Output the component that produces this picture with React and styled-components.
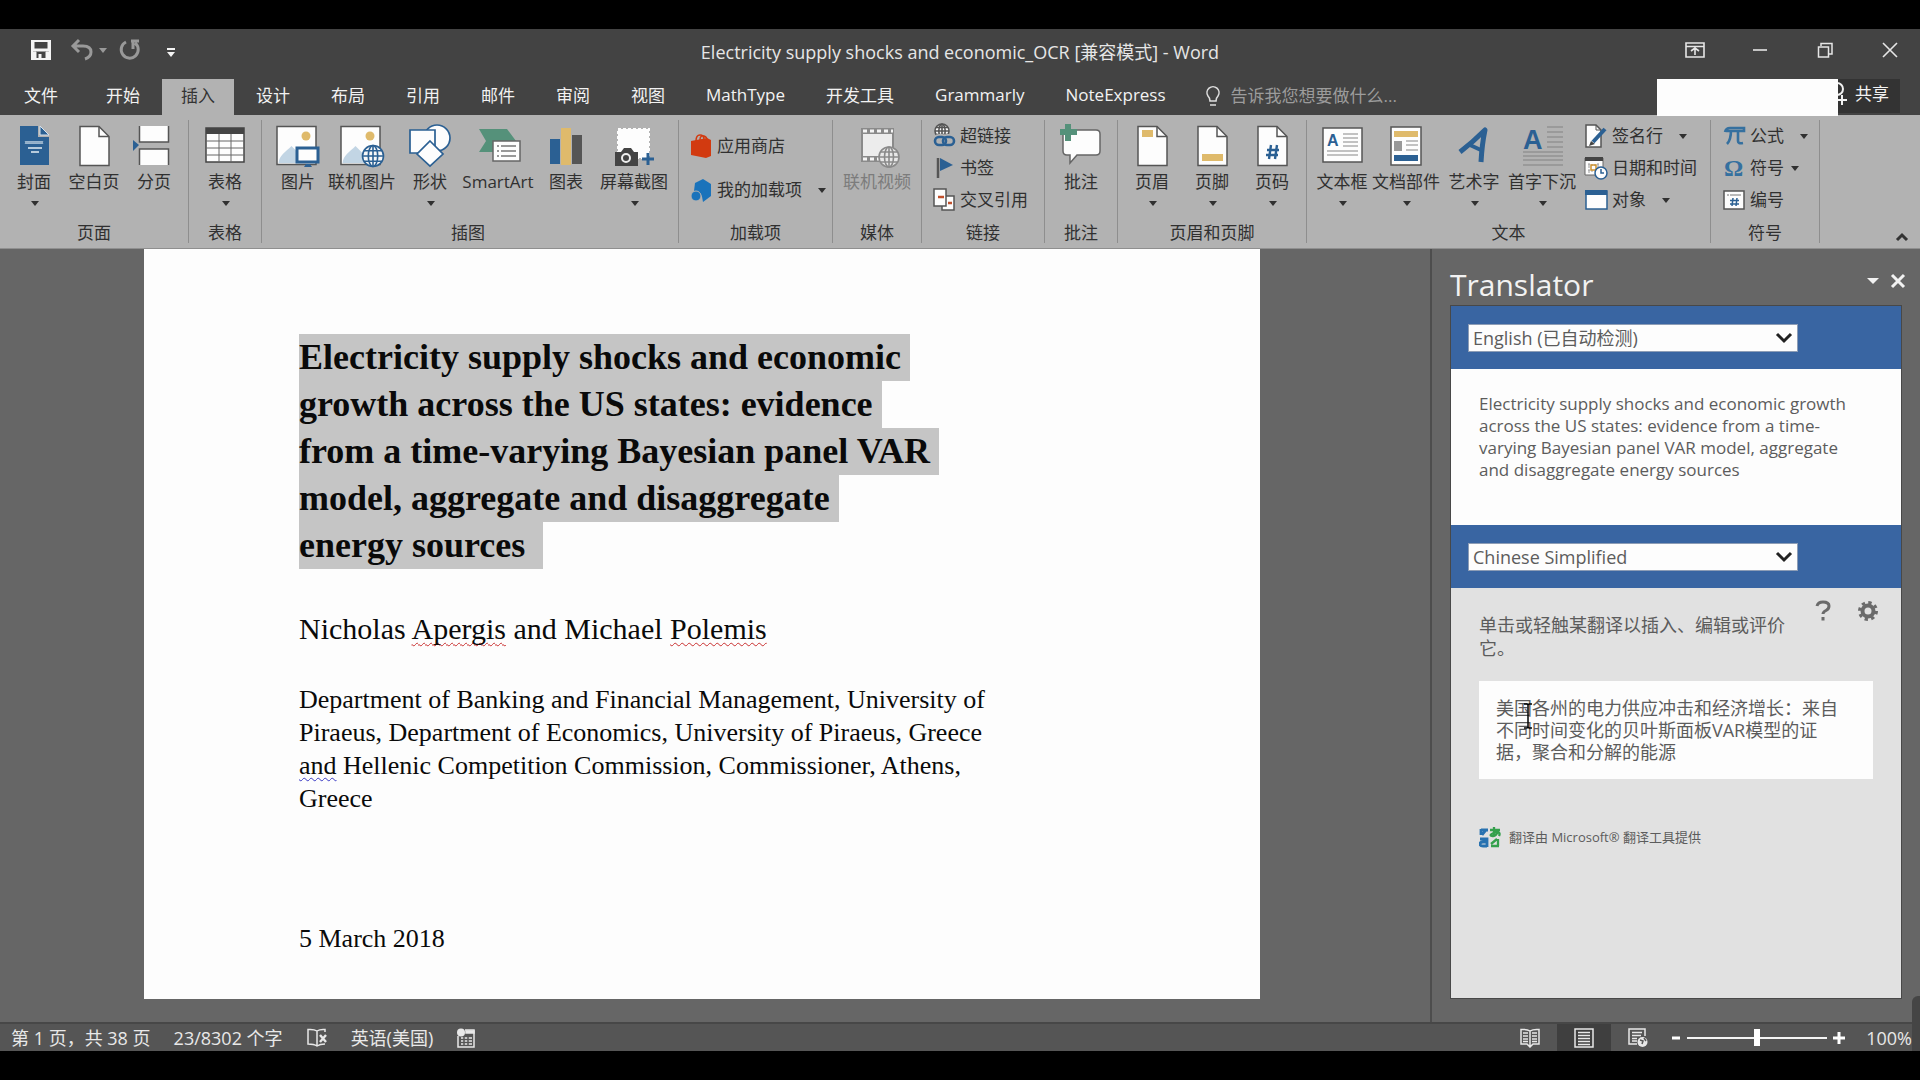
import React from "react"
import styled, { createGlobalStyle, css } from "styled-components"

const colors = {
  chrome: "#434343",
  ribbon: "#b2b2b2",
  desk: "#666666",
  status: "#555555",
  blue: "#2b6093",
  paneBlue: "#3965a2",
  dark: "#444444",
  gold: "#dfba6b",
  green: "#55917a"
}

const GlobalStyle = createGlobalStyle`
  * {
    box-sizing: border-box;
  }
  body {
    margin: 0;
    background: black;
    font-family: "Open Sans", "Noto Sans CJK SC", sans-serif;
    font-size: 17px;
  }
  button, input, select {
    font: inherit;
    color: inherit;
    border: none;
    padding: 0;
    margin: 0;
    background: none;
  }
  svg {
    display: block;
    flex: none;
  }
`

const Window = styled.div`
  min-height: 100vh;
  padding: 29px 0;
  display: flex;
  flex-direction: column;
  background: black;
`

/* title bar */

const TitleBar = styled.header`
  display: grid;
  grid-template-columns: 1fr auto 1fr;
  height: 50px;
  background: ${colors.chrome};
  color: #e6e6e6;
`
const QuickAccess = styled.div`
  display: flex;
  align-items: center;
  gap: 10px;
  padding: 0 0 8px 29px;
`
const QuickButton = styled.button`
  display: flex;
  align-items: center;
  justify-content: center;
  height: 28px;
  color: ${props => (props.$dim ? "#999" : "#f4f4f4")};
`
const DocumentName = styled.div`
  font-size: 18px;
  line-height: 46px;
  white-space: nowrap;
`
const WindowButtons = styled.div`
  display: flex;
  justify-content: flex-end;
  gap: 5px;
`
const WindowButton = styled.button`
  display: flex;
  align-items: center;
  justify-content: center;
  width: 60px;
  height: 42px;
`

/* tabs */

const TabBar = styled.nav`
  position: relative;
  display: flex;
  gap: 3px;
  height: 36px;
  padding-right: 20px;
  background: ${colors.chrome};
  color: #f2f2f2;
`
const activeTab = css`
  background: ${colors.ribbon};
  color: #333;
`
const Tab = styled.button`
  padding: 0 19px 5px;
  height: 36px;
  white-space: nowrap;
  ${props => props.$file && css`
    padding: 0 26px 5px 24px;
  `}
  ${props => props.$active && activeTab}
`
const TellMe = styled.label`
  display: flex;
  flex: 1;
  align-items: center;
  gap: 10px;
  padding: 0 0 3px 17px;
  color: #aaa;
`
const TellMeInput = styled.input`
  width: 200px;
  height: 30px;
  outline: none;
  &::placeholder {
    color: #9c9c9c;
    opacity: 1;
  }
`
const ShareButton = styled.button`
  display: flex;
  align-items: center;
  justify-content: flex-end;
  gap: 6px;
  width: 96px;
  height: 34px;
  padding: 0 11px 7px 0;
  background: #333;
`
const AccountCover = styled.div`
  position: absolute;
  top: 0;
  right: 82px;
  width: 181px;
  height: 37px;
  background: #fdfdfd;
`

/* ribbon */

const Ribbon = styled.div`
  display: flex;
  height: 134px;
  padding-top: 5px;
  background: ${colors.ribbon};
  border-bottom: 1px solid #8f8f8f;
  color: #303030;
`
const Group = styled.section`
  display: flex;
  flex-direction: column;
  height: 123px;
  padding: 0 ${props => props.$padEnd || props.$pad || 6}px 0 ${props => props.$pad || 6}px;
  border-right: 1px solid #8e8e8e;
`
const GroupBody = styled.div`
  display: flex;
  flex: 1;
`
const GroupName = styled.div`
  text-align: center;
  line-height: 20px;
`
const BigButton = styled.button`
  display: flex;
  flex-direction: column;
  align-items: center;
  width: ${props => (props.$wide ? 68 : 60)}px;
  padding-top: 4px;
  line-height: 28px;
  white-space: nowrap;
  color: ${props => (props.disabled ? "#7c7c7c" : "inherit")};
`
const Stack = styled.div`
  display: flex;
  flex-direction: column;
  gap: ${props => (props.$loose ? 16 : 4)}px;
  padding: ${props => (props.$loose ? "12px 0 0 4px" : "2px 8px 0 2px")};
  ${props => props.$inset && css`
    padding-left: 8px;
  `}
`
const SmallButton = styled.button`
  display: flex;
  align-items: center;
  gap: 4px;
  height: 28px;
  line-height: 28px;
  white-space: nowrap;
`
const CaretShape = styled.span`
  width: 0;
  border: 4px solid transparent;
  border-top: 5px solid currentColor;
  border-bottom: none;
  ${props => props.$below && css`
    margin: 5px 0 0 2px;
  `}
  ${props => props.$side && css`
    margin-left: ${props.$near ? 3 : 12}px;
  `}
`
const CollapseButton = styled.button`
  margin: auto 11px 6px auto;
`

/* workspace */

const Workspace = styled.main`
  display: flex;
  flex: 1;
  background: ${colors.desk};
`
const Desk = styled.div`
  display: flex;
  flex: 1;
  padding: 0 170px 23px 144px;
`
const Page = styled.article`
  flex: 1;
  padding: 85px 155px 0;
  background: #fdfdfd;
  color: #0a0a0a;
  font-family: "Liberation Serif", "Noto Sans CJK SC", serif;
  font-size: 26px;
  line-height: 33px;
`
const Heading = styled.h1`
  margin: 0 0 41px;
  font-size: 36px;
  line-height: 47px;
`
const Selected = styled.span`
  display: block;
  width: fit-content;
  background: #c5c5c5;
  white-space: pre;
`
const Authors = styled.p`
  margin: 0 0 35px;
  font-size: 30px;
  line-height: 38px;
`
const Affiliation = styled.p`
  max-width: 710px;
  margin: 0 0 107px;
`
const Misspelt = styled.span`
  text-decoration: underline wavy ${props => props.$color || "#c93030"} 1px;
  text-decoration-skip-ink: none;
  text-underline-offset: 3px;
`
const DateLine = styled.p`
  margin: 0;
`

/* translator pane */

const Pane = styled.aside`
  display: flex;
  flex-direction: column;
  width: 490px;
  padding: 17px 18px 23px 18px;
  border-left: 2px solid #4d4d4d;
`
const PaneHeader = styled.div`
  display: flex;
  align-items: flex-start;
  gap: 10px;
  height: 39px;
  margin-right: -4px;
  color: #f2f2f2;
`
const PaneTitle = styled.h2`
  flex: 1;
  margin: 0;
  font-size: 30px;
  font-weight: 400;
  line-height: 38px;
`
const PaneButton = styled.button`
  display: flex;
  align-items: center;
  height: 30px;
`
const PaneBody = styled.div`
  display: flex;
  flex: 1;
  flex-direction: column;
  border: 1px solid #484848;
  background: #e1e1e1;
  color: #5c5c5c;
  line-height: 22px;
`
const LanguageBar = styled.div`
  display: flex;
  align-items: center;
  height: 63px;
  padding: 0 17px;
  background: ${colors.paneBlue};
`
const SelectBox = styled.label`
  display: grid;
  align-items: center;
  width: 330px;
  height: 28px;
  background: #fdfdfd;
  border: 1px solid #8d9db6;
  > * {
    grid-area: 1 / 1;
  }
  > svg {
    justify-self: end;
    margin-right: 4px;
    pointer-events: none;
  }
`
const Select = styled.select`
  appearance: none;
  width: 100%;
  height: 26px;
  padding-left: 4px;
  font-size: 18px;
  outline: none;
`
const SourceText = styled.div`
  height: 156px;
  padding: 24px 40px 0 28px;
  background: #fdfdfd;
`
const Result = styled.div`
  display: flex;
  flex: 1;
  flex-direction: column;
  padding: 12px 28px;
`
const HintRow = styled.div`
  display: flex;
  justify-content: space-between;
  font-size: 18px;
  line-height: 23px;
`
const Hint = styled.p`
  width: 320px;
  margin: 14px 0 21px;
`
const Tools = styled.div`
  display: flex;
  align-items: flex-start;
  gap: 26px;
  margin-right: -6px;
  color: #6a6a6a;
`
const Translation = styled.div`
  position: relative;
  padding: 16px 27px 16px 17px;
  background: #fdfdfd;
  font-size: 18px;
`
const Pointer = styled.svg`
  position: absolute;
  left: 44px;
  top: 22px;
`
const Credit = styled.div`
  display: flex;
  align-items: center;
  gap: 8px;
  margin-top: 46px;
  font-size: 13px;
  line-height: 24px;
`

/* status bar */

const StatusBar = styled.footer`
  display: flex;
  align-items: center;
  height: 29px;
  padding: 0 8px 0 11px;
  border-top: 2px solid #474747;
  background: ${colors.status};
  color: #e8e8e8;
  font-size: 18px;
  line-height: 26px;
  white-space: nowrap;
`
const StatusItems = styled.div`
  display: flex;
  flex: 1;
  align-items: center;
  gap: 23px;
`
const ViewButton = styled.button`
  display: flex;
  align-items: center;
  justify-content: center;
  width: 54px;
  height: 27px;
  background: ${props => (props.$active ? "#3f3f3f" : "none")};
`
const ZoomButton = styled.button`
  display: flex;
  align-items: center;
  padding: 0 6px;
`
const ZoomSlider = styled.input`
  appearance: none;
  width: 140px;
  height: 18px;
  background: linear-gradient(#f4f4f4, #f4f4f4) center / 100% 2px no-repeat;
  &::-webkit-slider-thumb {
    appearance: none;
    width: 6px;
    height: 17px;
    background: white;
  }
`
const ZoomValue = styled.span`
  width: 61px;
  text-align: right;
`
const ScrollThumb = styled.div`
  position: absolute;
  right: 0;
  bottom: 29px;
  width: 8px;
  height: 55px;
  border-radius: 6px 0 0 0;
  background: #454545;
`

const Big = ({ children }) => (
  <svg width="52" height="44" viewBox="0 0 52 44" fill="none">{children}</svg>
)
const Small = ({ children }) => (
  <svg width="24" height="26" viewBox="0 0 24 26" fill="none">{children}</svg>
)

const Globe = ({ x, y, r, color, fill = "#f8f8f8" }) => (
  <g stroke={color} strokeWidth="1.6" fill="none">
    <circle cx={x} cy={y} r={r} fill={fill} />
    <ellipse cx={x} cy={y} rx={r * 0.45} ry={r} />
    <path d={`M${x} ${y - r}V${y + r}M${x - r} ${y}H${x + r}M${x - r * 0.86} ${y - r * 0.5}H${x + r * 0.86}M${x - r * 0.86} ${y + r * 0.5}H${x + r * 0.86}`} />
  </g>
)
const Sheet = ({ children }) => (
  <Big>
    <path d="M12 2.5h19l10 10v29H12z" fill="#fdfdfd" stroke="#555" strokeWidth="1.5" />
    <path d="M31 2.5v10h10" stroke="#555" strokeWidth="1.5" />
    {children}
  </Big>
)
const Photo = ({ children }) => (
  <Big>
    <path d="M5 2.5h39v38H5z" fill="#fdfdfd" stroke="#555" strokeWidth="1.5" />
    <circle cx="34" cy="12" r="4.5" fill={colors.gold} />
    <path d="M6.500 39c1-8 7-11 13-17l10 10v7z" fill="#c2d5e4" />
    {children}
  </Big>
)

const CoverIcon = () => (
  <Big>
    <path d="M12 2h18v11h11v28H12z" fill={colors.blue} />
    <path d="M32 2l9 9h-9z" fill={colors.blue} stroke="#d5e2ee" />
    <path d="M17 17l2 3 2-3 2 3 2-3 2 3 2-3 2 3 2-3 2 3M17 20l2-3 2 3 2-3 2 3 2-3 2 3 2-3 2 3 2-3" stroke="#c8d8e6" strokeWidth=".8" />
    <path d="M20 24h14M23 28h8" stroke="#e6eef5" strokeWidth="1.5" />
  </Big>
)
const BreakIcon = () => (
  <Big>
    <path d="M11.500 2v16h29V2M11.500 41V25h29v16" fill="#fdfdfd" stroke="#555" strokeWidth="1.5" />
    <path d="M5 16l6 5-6 6z" fill={colors.blue} />
  </Big>
)
const TableIcon = () => (
  <Big>
    <path d="M7 4h38v34H7z" fill="#fdfdfd" stroke="#444" strokeWidth="1.5" />
    <path d="M7 4h38v6H7z" fill="#444" />
    <path d="M7 17h38M7 24h38M7 31h38M20 10v28M32 10v28" stroke="#666" />
  </Big>
)
const PictureIcon = () => (
  <Photo>
    <path d="M25 24h21v14H25z" fill="#fdfdfd" stroke={colors.blue} strokeWidth="3" />
    <path d="M32 43h8l-2-3h-4z" fill={colors.blue} />
  </Photo>
)
const OnlinePictureIcon = () => (
  <Photo>
    <Globe x={37} y={32} r={10.5} color={colors.blue} />
  </Photo>
)
const ShapesIcon = () => (
  <Big>
    <g fill="#fdfdfd" stroke={colors.blue} strokeWidth="1.7">
      <circle cx="33" cy="14" r="13" />
      <path d="M6 6h25v23H6z" />
      <path d="M26 17l13 13-13 12-13-12z" />
    </g>
  </Big>
)
const SmartArtIcon = () => (
  <Big>
    <path d="M7 5h28l9 12-9 11H7l7-11z" fill={colors.green} />
    <path d="M21 17h27v20H21z" fill="#fdfdfd" stroke="#666" strokeWidth="1.5" />
    <path d="M29 22h15M29 27h15M29 32h15M25 22h2M25 27h2M25 32h2" stroke="#777" strokeWidth="1.4" />
  </Big>
)
const ChartIcon = () => (
  <Big>
    <path d="M10 15h10v25H10z" fill={colors.blue} />
    <path d="M21 4h10v37H21z" fill={colors.gold} />
    <path d="M32 11h10v29H32z" fill="#555" />
  </Big>
)
const ScreenshotIcon = () => (
  <Big>
    <path d="M10 5h31v29H10z" fill="#fdfdfd" stroke="#fdfdfd" strokeWidth="2" strokeDasharray="3 2" />
    <path d="M7 28h6l3-4h7l3 4h4v14H7z" fill={colors.dark} />
    <circle cx="18" cy="34" r="4" stroke="#eee" strokeWidth="2" />
    <path d="M40 29v12M34 35h12" stroke={colors.blue} strokeWidth="3" />
  </Big>
)
const VideoIcon = () => (
  <Big>
    <path d="M10 4h33v34H10z" fill="#8a8a8a" />
    <path d="M12 10h29v22H12z" fill="#ececec" />
    <path d="M12 7h30M12 35h30" stroke="#f4f4f4" strokeWidth="3" strokeDasharray="4 3" />
    <Globe x={38} y={33} r={10} color="#8a8a8a" fill="#e8e8e8" />
  </Big>
)
const CommentIcon = () => (
  <Big>
    <path d="M12 6h29q4 0 4 4v17q0 4-4 4H22l-7 8v-8h-3q-4 0-4-4V10q0-4 4-4z" fill="#fdfdfd" stroke="#666" strokeWidth="1.5" />
    <path d="M13 0v17M5 8h17" stroke={colors.green} strokeWidth="6" />
  </Big>
)
const HeaderIcon = () => (
  <Sheet><path d="M16 6h11v7H16z" fill={colors.gold} /></Sheet>
)
const FooterIcon = () => (
  <Sheet><path d="M16 30h21v7H16z" fill={colors.gold} /></Sheet>
)
const NumberIcon = () => (
  <Sheet>
    <path d="M25 21l-2 14M31 21l-2 14M21 26h12M20 31h12" stroke={colors.blue} strokeWidth="2.400" />
  </Sheet>
)
const SvgLetter = styled.text`
  font-family: "Liberation Sans", sans-serif;
  font-weight: bold;
  fill: ${colors.blue};
`
const TextBoxIcon = () => (
  <Big>
    <path d="M7 4h39v34H7z" fill="#fdfdfd" stroke="#555" strokeWidth="1.5" />
    <SvgLetter x="11" y="22" fontSize="16">A</SvgLetter>
    <path d="M27 10h15M27 14h15M27 18h15M27 22h15M11 27h31M11 31h31" stroke="#888" strokeWidth="1.2" />
  </Big>
)
const PartsIcon = () => (
  <Big>
    <path d="M11 3h30v38H11z" fill="#fdfdfd" stroke="#555" strokeWidth="1.5" />
    <path d="M14 7h24v6H14z" fill={colors.gold} />
    <path d="M14 17h8v10h-8z" fill="#999" />
    <path d="M26 17h12M26 21h12M26 26h12" stroke="#888" strokeWidth="1.2" />
    <path d="M14 31h24v6H14z" fill={colors.blue} />
  </Big>
)
const WordArtIcon = () => (
  <Big>
    <path d="M12 28Q25 18 37 6q-3 14-4 32" stroke={colors.blue} strokeWidth="5" strokeLinejoin="round" />
    <path d="M22 21l13 6" stroke={colors.blue} strokeWidth="4" />
  </Big>
)
const DropCapIcon = () => (
  <Big>
    <SvgLetter x="7" y="25" fontSize="27">A</SvgLetter>
    <path d="M31 3h16M31 8h16M31 13h16M31 18h16M31 23h16M7 28h40M7 32h40M7 36h40M7 41h40" stroke="#939393" strokeWidth="1.3" />
  </Big>
)

const StoreIcon = () => (
  <Small>
    <path d="M2 8l16-3 4 2v16l-5 2-15-3z" fill="#d23a10" />
    <path d="M7 8q0-6 4-6t4 5M11 7q0-5 4-4 3 1 3 4" stroke="#d23a10" strokeWidth="1.5" />
  </Small>
)
const AddinIcon = () => (
  <Small>
    <path d="M6 6l8-4 8 5v12l-8 6q-1-12-9-11z" fill="#1a73bb" />
    <circle cx="7" cy="19" r="5" fill="#1a73bb" stroke={colors.ribbon} />
  </Small>
)
const LinkIcon = () => (
  <Small>
    <Globe x={10} y={8} r={7} color="#555" />
    <g stroke={colors.ribbon} strokeWidth="6">
      <rect x="3" y="14" width="11" height="8" rx="4" />
      <rect x="11" y="14" width="11" height="8" rx="4" />
    </g>
    <g stroke={colors.blue} strokeWidth="2.600">
      <rect x="3" y="14" width="11" height="8" rx="4" />
      <rect x="11" y="14" width="11" height="8" rx="4" />
    </g>
  </Small>
)
const FlagIcon = () => (
  <Small>
    <path d="M6 3v20" stroke="#555" strokeWidth="2.500" />
    <path d="M8 3l13 7-13 6z" fill={colors.blue} />
  </Small>
)
const CrossRefIcon = () => (
  <Small>
    <path d="M13 9h9v14h-12v-5" fill="#fdfdfd" stroke="#555" strokeWidth="1.500" />
    <path d="M2 2h12v17H2z" fill="#fdfdfd" stroke="#555" strokeWidth="1.500" />
    <path d="M6 10h6M16 16h4" stroke="#c0502c" strokeWidth="2.500" />
  </Small>
)
const SignatureIcon = () => (
  <Small>
    <path d="M2 2h10l5 5v17H2z" fill="#fdfdfd" stroke="#555" strokeWidth="1.500" />
    <path d="M12 2v5h5" stroke="#555" />
    <path d="M9 19L21 6" stroke={colors.blue} strokeWidth="4" />
    <path d="M5 23l2-5 4 3z" fill="#444" />
  </Small>
)
const CalendarIcon = () => (
  <Small>
    <path d="M1 3h18v17H1z" fill="#fdfdfd" stroke="#666" />
    <path d="M1 2h18v4H1z" fill="#444" />
    <path d="M4 10h12M4 16h12M5 8v10M14 8v10" stroke="#999" strokeDasharray="2 1" />
    <path d="M7 10h5v5H7z" stroke="#cf9430" strokeWidth="1.500" />
    <circle cx="17" cy="18" r="6" fill="#fdfdfd" stroke={colors.blue} strokeWidth="1.500" />
    <path d="M17 14v4h3" stroke={colors.blue} strokeWidth="1.500" />
  </Small>
)
const ObjectIcon = () => (
  <Small>
    <path d="M2 4h21v18H2z" fill="#fdfdfd" stroke={colors.blue} strokeWidth="1.500" />
    <path d="M1 3h22v5H1z" fill={colors.blue} />
  </Small>
)
const SymbolLetter = styled.text`
  font-family: "Liberation Serif", serif;
  font-weight: bold;
  font-size: 24px;
  fill: #35709f;
`
const FormulaIcon = () => (
  <Small>
    <path d="M3 9q1-4 5-4h14v3H3M9 7q0 10-4 14M16 7v11q0 3 5 2" stroke="#35709f" strokeWidth="2.600" />
  </Small>
)
const OmegaIcon = () => (
  <Small><SymbolLetter x="2" y="21">Ω</SymbolLetter></Small>
)
const NumberingIcon = () => (
  <Small>
    <path d="M2 4h20v18H2z" fill="#fdfdfd" stroke="#555" strokeWidth="1.500" />
    <path d="M5 8h2M8 8h11" stroke="#777" />
    <path d="M11 11l-1 8M15 11l-1 8M8 13.500h9M8 17h9" stroke={colors.blue} strokeWidth="1.500" />
  </Small>
)

const tabs = [
  { text: "文件", file: true },
  { text: "开始" },
  { text: "插入", active: true },
  { text: "设计" },
  { text: "布局" },
  { text: "引用" },
  { text: "邮件" },
  { text: "审阅" },
  { text: "视图" },
  { text: "MathType" },
  { text: "开发工具" },
  { text: "Grammarly" },
  { text: "NoteExpress" }
]

const groups = [
  { name: "页面", pad: 4, big: [
    { text: "封面", icon: CoverIcon, caret: true },
    { text: "空白页", icon: Sheet },
    { text: "分页", icon: BreakIcon }
  ] },
  { name: "表格", big: [{ text: "表格", icon: TableIcon, caret: true }] },
  { name: "插图", padEnd: 10, big: [
    { text: "图片", icon: PictureIcon },
    { text: "联机图片", icon: OnlinePictureIcon, wide: true },
    { text: "形状", icon: ShapesIcon, wide: true, caret: true },
    { text: "SmartArt", icon: SmartArtIcon, wide: true },
    { text: "图表", icon: ChartIcon, wide: true },
    { text: "屏幕截图", icon: ScreenshotIcon, wide: true, caret: true }
  ] },
  { name: "加载项", loose: true, small: [
    { text: "应用商店", icon: StoreIcon },
    { text: "我的加载项", icon: AddinIcon, caret: true }
  ] },
  { name: "媒体", pad: 10, big: [{ text: "联机视频", icon: VideoIcon, wide: true, disabled: true }] },
  { name: "链接", pad: 8, small: [
    { text: "超链接", icon: LinkIcon },
    { text: "书签", icon: FlagIcon },
    { text: "交叉引用", icon: CrossRefIcon }
  ] },
  { name: "批注", big: [{ text: "批注", icon: CommentIcon }] },
  { name: "页眉和页脚", pad: 4, big: [
    { text: "页眉", icon: HeaderIcon, caret: true },
    { text: "页脚", icon: FooterIcon, caret: true },
    { text: "页码", icon: NumberIcon, caret: true }
  ] },
  { name: "文本", pad: 5, inset: true, big: [
    { text: "文本框", icon: TextBoxIcon, caret: true },
    { text: "文档部件", icon: PartsIcon, wide: true, caret: true },
    { text: "艺术字", icon: WordArtIcon, wide: true, caret: true },
    { text: "首字下沉", icon: DropCapIcon, wide: true, caret: true }
  ], small: [
    { text: "签名行", icon: SignatureIcon, caret: true },
    { text: "日期和时间", icon: CalendarIcon },
    { text: "对象", icon: ObjectIcon, caret: true }
  ] },
  { name: "符号", pad: 3, inset: true, small: [
    { text: "公式", icon: FormulaIcon, caret: true },
    { text: "符号", icon: OmegaIcon, caret: true, near: true },
    { text: "编号", icon: NumberingIcon }
  ] }
]

const RibbonGroup = ({ group }) => (
  <Group $pad={group.pad} $padEnd={group.padEnd}>
    <GroupBody>
      {group.big && group.big.map(({ icon: Icon, ...item }) => (
        <BigButton key={item.text} $wide={item.wide} disabled={item.disabled}>
          <Icon />
          {item.text}
          {item.caret && <CaretShape $below />}
        </BigButton>
      ))}
      {group.small && (
        <Stack $loose={group.loose} $inset={group.inset}>
          {group.small.map(({ icon: Icon, ...item }) => (
            <SmallButton key={item.text}>
              <Icon />
              {item.text}
              {item.caret && <CaretShape $side $near={item.near} />}
            </SmallButton>
          ))}
        </Stack>
      )}
    </GroupBody>
    <GroupName>{group.name}</GroupName>
  </Group>
)

const LanguageSelect = ({ label, value }) => (
  <LanguageBar>
    <SelectBox>
      <Select aria-label={label} defaultValue={value}>
        <option>{value}</option>
      </Select>
      <svg width="18" height="12" viewBox="0 0 18 12" fill="none">
        <path d="M2 2l7 7 7-7" stroke="#222" strokeWidth="3" />
      </svg>
    </SelectBox>
  </LanguageBar>
)

const TopBar = () => (
  <TitleBar>
    <QuickAccess>
      <QuickButton aria-label="保存">
        <svg width="24" height="24" viewBox="0 0 24 24" fill="none" stroke="currentColor">
          <path d="M3 3h18v18H3z" strokeWidth="2" />
          <path d="M4 12h16" strokeWidth="3" />
          <path d="M4 3v9M20 3v9" strokeWidth="3" />
          <path d="M4 14h3v7H4zM17 14h3v7h-3z" fill="currentColor" />
          <path d="M11 16v5" strokeWidth="3" />
        </svg>
      </QuickButton>
      <QuickButton $dim aria-label="撤消">
        <svg width="36" height="24" viewBox="-6 0 36 24" fill="none" stroke="currentColor" strokeWidth="3">
          <path d="M10 2L4 8l6 6M4 8h10q8 0 8 6 0 5-6 7" />
        </svg>
        <CaretShape />
      </QuickButton>
      <QuickButton $dim aria-label="重复">
        <svg width="24" height="24" viewBox="-1 0 24 24" fill="none" stroke="currentColor" strokeWidth="3">
          <path d="M8 4a8.500 8.500 0 1 0 9 1M13 3h8M15 3v8" />
        </svg>
      </QuickButton>
      <QuickButton aria-label="自定义快速访问工具栏">
        <svg width="42" height="24" viewBox="-15 -5 42 24" fill="currentColor">
          <path d="M1 5h8v2H1zM1 9h8l-4 5z" />
        </svg>
      </QuickButton>
    </QuickAccess>
    <DocumentName>Electricity supply shocks and economic_OCR [兼容模式] - Word</DocumentName>
    <WindowButtons>
      <WindowButton aria-label="功能区显示选项">
        <svg width="20" height="16" viewBox="0 0 20 16" fill="none" stroke="currentColor" strokeWidth="1.600">
          <path d="M1 1h18v14H1zM1 4.500h18M10 13V6M6 9l4-3 4 3" />
        </svg>
      </WindowButton>
      <WindowButton aria-label="最小化">
        <svg width="16" height="16" viewBox="0 0 16 16"><path d="M1 8h14" stroke="currentColor" strokeWidth="1.600" /></svg>
      </WindowButton>
      <WindowButton aria-label="还原">
        <svg width="16" height="16" viewBox="0 0 16 16" fill="none" stroke="currentColor" strokeWidth="1.500">
          <path d="M1.500 5h10v10h-10zM4 4V1.500h11V12h-3" />
        </svg>
      </WindowButton>
      <WindowButton aria-label="关闭">
        <svg width="16" height="16" viewBox="0 0 16 16"><path d="M1 1l14 14M15 1L1 15" stroke="currentColor" strokeWidth="1.600" /></svg>
      </WindowButton>
    </WindowButtons>
  </TitleBar>
)

const Tabs = () => (
  <TabBar>
    {tabs.map(tab => (
      <Tab key={tab.text} $file={tab.file} $active={tab.active}>{tab.text}</Tab>
    ))}
    <TellMe>
      <svg width="16" height="22" viewBox="0 0 16 22" fill="none" stroke="#ddd" strokeWidth="1.600">
        <path d="M5 16q0-3-2-5a6 6 0 1 1 10 0q-2 2-2 5zM5 20h6" />
      </svg>
      <TellMeInput type="text" aria-label="操作说明搜索" placeholder="告诉我您想要做什么..." />
    </TellMe>
    <ShareButton>
      <svg width="20" height="26" viewBox="0 0 20 26" fill="none" stroke="currentColor" strokeWidth="2">
        <circle cx="8" cy="9" r="6" />
        <path d="M2 21q1-5 6-6M13 15v10M8 20h10" />
      </svg>
      共享
    </ShareButton>
    <AccountCover />
  </TabBar>
)

const Document = () => (
  <Desk>
    <Page>
      <Heading>
        <Selected>{"Electricity supply shocks and economic "}</Selected>
        <Selected>{"growth across the US states: evidence "}</Selected>
        <Selected>{"from a time-varying Bayesian panel VAR "}</Selected>
        <Selected>{"model, aggregate and disaggregate "}</Selected>
        <Selected>{"energy sources  "}</Selected>
      </Heading>
      <Authors>
        Nicholas <Misspelt>Apergis</Misspelt> and Michael <Misspelt>Polemis</Misspelt>
      </Authors>
      <Affiliation>
        Department of Banking and Financial Management, University of Piraeus, Department of
        Economics, University of Piraeus, Greece <Misspelt $color="#3a3ac4">and</Misspelt> Hellenic
        Competition Commission, Commissioner, Athens, Greece
      </Affiliation>
      <DateLine>5 March 2018</DateLine>
    </Page>
  </Desk>
)

const Translator = () => (
  <Pane>
    <PaneHeader>
      <PaneTitle>Translator</PaneTitle>
      <PaneButton aria-label="任务窗格选项">
        <svg width="14" height="8" viewBox="0 0 14 8"><path d="M1 1h12L7 7z" fill="currentColor" /></svg>
      </PaneButton>
      <PaneButton aria-label="关闭窗格">
        <svg width="16" height="16" viewBox="0 0 16 16"><path d="M2 2l12 12M14 2L2 14" stroke="currentColor" strokeWidth="3" /></svg>
      </PaneButton>
    </PaneHeader>
    <PaneBody>
      <LanguageSelect label="源语言" value="English (已自动检测)" />
      <SourceText>
        Electricity supply shocks and economic growth across the US states: evidence from a
        time-varying Bayesian panel VAR model, aggregate and disaggregate energy sources
      </SourceText>
      <LanguageSelect label="目标语言" value="Chinese Simplified" />
      <Result>
        <HintRow>
          <Hint>单击或轻触某翻译以插入、编辑或评价它。</Hint>
          <Tools>
            <button aria-label="帮助">
              <svg width="16" height="22" viewBox="0 0 16 22" fill="none" stroke="currentColor" strokeWidth="3">
                <path d="M2 6q1-4 6-4 6 0 6 4 0 3-3 4.500T8 14M8 17v3.500" />
              </svg>
            </button>
            <button aria-label="设置">
              <svg width="22" height="22" viewBox="0 0 22 22" fill="none" stroke="currentColor">
                <circle cx="11" cy="11" r="5.500" strokeWidth="4" />
                <circle cx="11" cy="11" r="8.500" strokeWidth="3" strokeDasharray="3.340 3.340" />
              </svg>
            </button>
          </Tools>
        </HintRow>
        <Translation>
          美国各州的电力供应冲击和经济增长：来自不同时间变化的贝叶斯面板VAR模型的证据，聚合和分解的能源
          <Pointer width="10" height="26" viewBox="0 0 10 26" fill="none">
            <path d="M1 1h3l1 1 1-1h3M5 2v22M1 25h3l1-1 1 1h3" stroke="black" strokeWidth="1.500" />
          </Pointer>
        </Translation>
        <Credit>
          <svg width="22" height="22" viewBox="0 0 22 22" fill="none" strokeWidth="2.800">
            <path d="M2 3v6M2 4h7M7 4L3 9M1 13h7v8M8 16H4q-3 0-3 2t3 2h4" stroke="#2872b0" />
            <path d="M11 4h10M15 1v9M19 5q-2 6-6 5t4-4q5 0 3 4M12 20h8M19 13v7M18 13l-6 5" stroke="#34a04c" strokeWidth="2.300" />
          </svg>
          翻译由 Microsoft® 翻译工具提供
        </Credit>
      </Result>
    </PaneBody>
  </Pane>
)

const Status = () => (
  <StatusBar>
    <StatusItems>
      <span>第 1 页，共 38 页</span>
      <span>23/8302 个字</span>
      <svg width="22" height="20" viewBox="0 0 22 20" fill="none" stroke="currentColor" strokeWidth="1.500">
        <path d="M11 3Q8 1 2 1.500V16q6 0 9 2 3-2 8-2M11 3v15M11 3q3-2 8-1.500V4" />
        <path d="M14 7l6 7M20 7l-6 7" strokeWidth="2.400" />
      </svg>
      <span>英语(美国)</span>
      <svg width="20" height="20" viewBox="0 0 20 20" fill="none" stroke="currentColor" strokeWidth="1.500">
        <path d="M2 8v11h16V2H9" />
        <path d="M10 3h8v2h-8z" fill="currentColor" />
        <path d="M5 10h11M5 13h11M5 16h11" strokeWidth="1.600" />
        <path d="M8 9v9M12 9v9" stroke={colors.status} />
        <circle cx="5" cy="4.500" r="4" fill="currentColor" stroke="none" />
      </svg>
    </StatusItems>
    <ViewButton aria-label="阅读视图">
      <svg width="20" height="20" viewBox="0 0 20 20" fill="none" stroke="currentColor" strokeWidth="1.500">
        <path d="M10 3Q7 1 1 1.500V16h6l3 3 3-3h6V1.500Q13 1 10 3zv15M3 5h5M3 8h5M3 11h5M3 13.500h5M12 5h5M12 8h5M12 11h5M12 13.500h5" />
      </svg>
    </ViewButton>
    <ViewButton $active aria-label="页面视图">
      <svg width="20" height="20" viewBox="0 0 20 20" fill="none" stroke="currentColor" strokeWidth="1.500">
        <path d="M1 1h18v18H1zM4 4.500h12M4 7.500h12M4 10.500h12M4 13.500h12M4 16.500h12" />
      </svg>
    </ViewButton>
    <ViewButton aria-label="Web 版式视图">
      <svg width="20" height="20" viewBox="0 0 20 20" fill="none" stroke="currentColor" strokeWidth="1.500">
        <path d="M9 16H1V1h16v7M4 4.500h10M4 7.500h9M4 10.500h5M4 13h5" />
        <circle cx="14.500" cy="14" r="5" fill="currentColor" stroke="none" />
        <path d="M12 12l3 1-1 3M16 10l2 3" stroke={colors.status} />
      </svg>
    </ViewButton>
    <ZoomButton aria-label="缩小">
      <svg width="10" height="12" viewBox="0 0 10 12"><path d="M1 6h8" stroke="white" strokeWidth="3" /></svg>
    </ZoomButton>
    <ZoomSlider type="range" min="0" max="200" defaultValue="100" aria-label="显示比例" />
    <ZoomButton aria-label="放大">
      <svg width="12" height="12" viewBox="0 0 12 12"><path d="M0 6h12M6 0v12" stroke="white" strokeWidth="3" /></svg>
    </ZoomButton>
    <ZoomValue>100%</ZoomValue>
  </StatusBar>
)

export default function App() {
  return (
    <Window>
      <GlobalStyle />
      <TopBar />
      <Tabs />
      <Ribbon>
        {groups.map(group => <RibbonGroup key={group.name} group={group} />)}
        <CollapseButton aria-label="折叠功能区">
          <svg width="14" height="10" viewBox="0 0 14 10" fill="none">
            <path d="M2 8l5-5 5 5" stroke="#333" strokeWidth="3" />
          </svg>
        </CollapseButton>
      </Ribbon>
      <Workspace>
        <Document />
        <Translator />
      </Workspace>
      <Status />
      <ScrollThumb />
    </Window>
  )
}
